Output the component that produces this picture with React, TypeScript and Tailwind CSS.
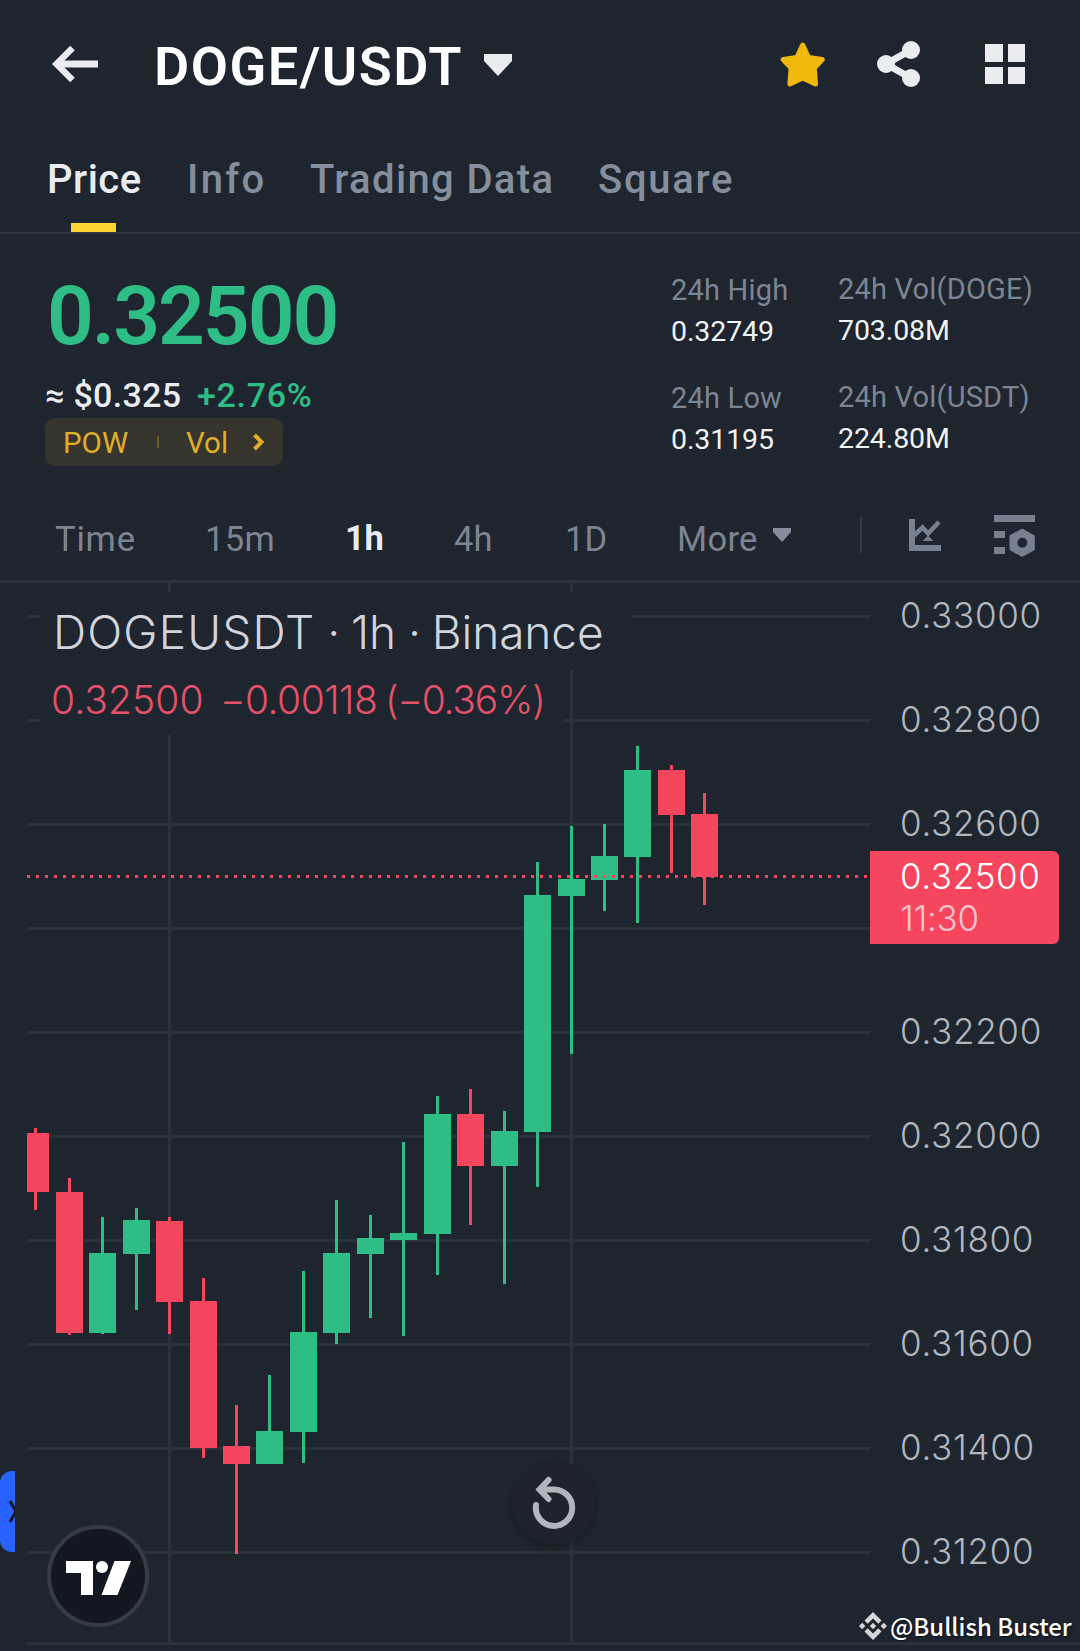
import React from 'react';

type Candle = { x: number; w?: number; wick: number; top: number; bottom: number; high: number; low: number; up: boolean };

const GREEN = '#2ebd85';
const RED = '#f6465d';

/* The chart's viewBox starts at the page offset of its pane. */
const CHART_TOP = 580;

const candles: Candle[] = [
  { x: 27, w: 22, wick: 34, top: 1133, bottom: 1192, high: 1128, low: 1210, up: false },
  { x: 56, wick: 68, top: 1192, bottom: 1333, high: 1178, low: 1335, up: false },
  { x: 89, wick: 101, top: 1253, bottom: 1333, high: 1217, low: 1334, up: true },
  { x: 123, wick: 135, top: 1220, bottom: 1254, high: 1208, low: 1310, up: true },
  { x: 156, wick: 168, top: 1221, bottom: 1302, high: 1217, low: 1334, up: false },
  { x: 190, wick: 202, top: 1301, bottom: 1448, high: 1278, low: 1458, up: false },
  { x: 223, wick: 235, top: 1446, bottom: 1464, high: 1405, low: 1554, up: false },
  { x: 256, wick: 268, top: 1431, bottom: 1464, high: 1375, low: 1464, up: true },
  { x: 290, wick: 302, top: 1332, bottom: 1432, high: 1271, low: 1463, up: true },
  { x: 323, wick: 335, top: 1253, bottom: 1333, high: 1200, low: 1344, up: true },
  { x: 357, wick: 369, top: 1238, bottom: 1254, high: 1215, low: 1318, up: true },
  { x: 390, wick: 402, top: 1233, bottom: 1240, high: 1142, low: 1336, up: true },
  { x: 424, wick: 436, top: 1114, bottom: 1234, high: 1096, low: 1275, up: true },
  { x: 457, wick: 469, top: 1114, bottom: 1166, high: 1089, low: 1225, up: false },
  { x: 491, wick: 503, top: 1131, bottom: 1166, high: 1111, low: 1284, up: true },
  { x: 524, wick: 536, top: 895, bottom: 1132, high: 862, low: 1187, up: true },
  { x: 558, wick: 570, top: 879, bottom: 896, high: 826, low: 1054, up: true },
  { x: 591, wick: 603, top: 856, bottom: 880, high: 824, low: 911, up: true },
  { x: 624, wick: 636, top: 770, bottom: 857, high: 746, low: 923, up: true },
  { x: 658, wick: 670, top: 770, bottom: 815, high: 765, low: 873, up: false },
  { x: 691, wick: 703, top: 814, bottom: 877, high: 793, low: 905, up: false },
];

const gridRows = [616, 720, 824, 928, 1032, 1136, 1240, 1344, 1448, 1552];
const gridCols = [168, 570];
const axisLabels = ['0.33000', '0.32800', '0.32600', '', '0.32200', '0.32000', '0.31800', '0.31600', '0.31400', '0.31200'];

function Header() {
  return (
    <header className="flex h-[128px] items-center pl-[52px]">
      <svg className="h-[38px] w-[46px] shrink-0" viewBox="0 0 46 38" fill="none" stroke="#eaecef">
        <path d="M46 19H6" strokeWidth="7" />
        <path d="M20.5 3 4.5 19l16 16" strokeWidth="6.5" />
      </svg>
      <h1 className="ml-[56px] w-[330px] pt-[5px] font-[Roboto,sans-serif] text-[54px] leading-[66px] font-semibold tracking-[1.5px] whitespace-nowrap text-white">
        DOGE/USDT
      </h1>
      <svg className="mt-[2px] h-[22px] w-[28px] shrink-0" viewBox="0 0 28 22" fill="#eaecef">
        <path d="M0 0h28v7L14 22 0 7z" />
      </svg>
      <svg className="ml-[268px] h-[46px] w-[46px] shrink-0" viewBox="0 0 46 46" fill="#f0b90b" stroke="#f0b90b" strokeWidth="5" strokeLinejoin="round">
        <path d="M22.700 4 28.500 16.500 42.300 18.500 34.300 27 35.500 43 22.700 37 9.900 43 11.100 27 3.100 18.500 16.900 16.500z" />
      </svg>
      <svg className="ml-[51px] h-[46px] w-[44px] shrink-0" viewBox="0 0 44 46" fill="#eaecef">
        <circle cx="9" cy="23" r="9" />
        <circle cx="34" cy="9" r="9" />
        <circle cx="34" cy="37" r="9" />
        <path d="M34 9 9 23l25 14" fill="none" stroke="#eaecef" strokeWidth="7" />
      </svg>
      <div className="ml-[64px] grid h-[40px] w-[40px] grid-cols-2 gap-[5px]">
        <i className="bg-[#eaecef]" />
        <i className="bg-[#eaecef]" />
        <i className="bg-[#eaecef]" />
        <i className="bg-[#eaecef]" />
      </div>
    </header>
  );
}

function Tabs() {
  return (
    <nav className="flex h-[106px] border-b-2 border-[#2f353f] pl-[47px] font-[Roboto,sans-serif] text-[40px] leading-[47px] font-medium whitespace-nowrap text-[#848e9c]">
      <div className="flex w-[140px] flex-col pt-[28px] text-[#eaecef]">
        <span className="tracking-[0.500px]">Price</span>
        <span className="mt-[20px] ml-[24px] h-[9px] w-[45px] bg-[#fcd535]" />
      </div>
      <span className="w-[123px] pt-[28px] tracking-[2.300px]">Info</span>
      <span className="w-[288px] pt-[28px] tracking-[1.350px]">Trading Data</span>
      <span className="pt-[28px] tracking-[1.700px]">Square</span>
    </nav>
  );
}

function Stat({ label, value }: { label: string; value: string }) {
  return (
    <div>
      <div className="text-[29px] leading-[42px] tracking-[0.200px] text-[#7d8491]">{label}</div>
      <div className="text-[28.500px] leading-[42px] font-[450] tracking-[-0.100px] text-[#f1f3f5]">{value}</div>
    </div>
  );
}

function Summary() {
  return (
    <section className="flex h-[262px] pl-[45px] font-[Roboto,sans-serif] whitespace-nowrap">
      <div className="flex w-[626px] flex-col pt-[32px]">
        <div className="pl-[2px] text-[82px] leading-[100px] font-semibold tracking-[-2px] text-[#2ebd85]">0.32500</div>
        <div className="mt-[9px] flex h-[40px] text-[34px] leading-[40px] font-medium">
          <span className="w-[152px] tracking-[0.300px] text-[#eaecef]">≈ $0.325</span>
          <span className="tracking-[0.700px] text-[#2ebd85]">+2.76%</span>
        </div>
        <div className="mt-[3px] flex h-[48px] w-[238px] items-center rounded-[10px] bg-[#35342d] pl-[18px] text-[29.500px] text-[#e0af27]">
          <span className="w-[94px] pt-[2px]">POW</span>
          <i className="h-[12px] w-[2px] bg-[#6f5b28]" />
          <span className="ml-[27px] w-[67px] pt-[2px]">Vol</span>
          <svg className="h-[18px] w-[11px]" viewBox="0 0 11 18" fill="none" stroke="#e0af27" strokeWidth="4">
            <path d="M1.500 2 8.500 9l-7 7" />
          </svg>
        </div>
      </div>
      <div className="flex w-[167px] flex-col gap-[24px] pt-[35px]">
        <Stat label="24h High" value="0.32749" />
        <Stat label="24h Low" value="0.31195" />
      </div>
      <div className="flex flex-col gap-[24px] pt-[34px]">
        <Stat label="24h Vol(DOGE)" value="703.08M" />
        <Stat label="24h Vol(USDT)" value="224.80M" />
      </div>
    </section>
  );
}

function Intervals() {
  return (
    <nav className="flex h-[84px] items-center pt-[2px] pl-[55px] font-[Roboto,sans-serif] text-[34.500px] leading-[40px] whitespace-nowrap text-[#7d8491]">
      <span className="w-[150px] tracking-[0.800px]">Time</span>
      <span className="w-[140px] tracking-[0.300px]">15m</span>
      <span className="w-[109px] pb-[2px] font-bold tracking-[-0.300px] text-[#eaecef]">1h</span>
      <span className="w-[111px]">4h</span>
      <span className="w-[112px]">1D</span>
      <span className="w-[96px] tracking-[0.300px]">More</span>
      <svg className="mb-[8px] h-[14px] w-[18px]" viewBox="0 0 18 14" fill="#848e9c">
        <path d="M0 0h18v4L9 14 0 4z" />
      </svg>
      <i className="mb-[8px] ml-[69px] h-[36px] w-[2px] bg-[#363c46]" />
      <svg className="mb-[8px] ml-[47px] h-[32px] w-[32px]" viewBox="0 0 32 32" fill="none" stroke="#76808f">
        <path d="M3 0v29h29" strokeWidth="6" />
        <path d="M5 16.500l8.500-8 5.500 6L30 3" strokeWidth="4.500" />
        <path d="M13.700 22l5.300-5.500 5.300 5.500z" fill="#76808f" stroke="none" />
      </svg>
      <svg className="mb-[6px] ml-[53px] h-[42px] w-[42px]" viewBox="0 0 42 42" fill="#76808f">
        <path d="M0 0h41v7H0zM0 16h11v7H0zM0 32h11v7H0z" />
        <path fillRule="evenodd" d="M28.200 13.500l12.600 7V35l-12.600 7-12.700-7V20.500zM28.300 22.800a5 5 0 1 0 0 10 5 5 0 0 0 0-10z" />
      </svg>
    </nav>
  );
}

function Candles() {
  return (
    <svg className="absolute inset-0 h-[1071px] w-[1080px]" viewBox="0 580 1080 1071" shapeRendering="crispEdges">
      <g fill="#29313a">
        <rect x="0" y="580" width="1080" height="3" />
        {gridCols.map((x) => (
          <rect key={x} x={x} y={CHART_TOP} width="3" height="1064" />
        ))}
        {gridRows.map((y) => (
          <rect key={y} x="27" y={y - 1} width="843" height="3" />
        ))}
        <rect x="27" y="1642" width="1053" height="3" />
      </g>
      <rect x="40" y="592" width="591" height="78" fill="#1e252e" />
      <rect x="40" y="670" width="523" height="65" fill="#1e252e" />
      {candles.map((c) => (
        <g key={c.x} fill={c.up ? GREEN : RED}>
          <rect x={c.wick} y={c.high} width="3" height={c.low - c.high} />
          <rect x={c.x} y={c.top} width={c.w ?? 27} height={c.bottom - c.top} />
        </g>
      ))}
      <path d="M27 876.500H870" stroke={RED} strokeWidth="3" strokeDasharray="3 6" />
    </svg>
  );
}

function Chart() {
  return (
    <section className="relative h-[1071px] overflow-hidden font-[Inter,sans-serif] whitespace-nowrap">
      <Candles />
      <div className="relative flex h-full">
        <div className="w-[870px] pt-[21px] pl-[51px] font-light">
          <div className="pl-[2px] text-[46px] leading-[62px] text-[#d1d4dc]">
            <span className="tracking-[1.150px]">DOGEUSDT</span>
            <span className="tracking-[-1.100px]"> · </span>
            <span>1h</span>
            <span className="tracking-[-1.100px]"> · </span>
            <span className="tracking-[-0.100px]">Binance</span>
          </div>
          <div className="flex pt-[12px] text-[39px] leading-[50px] text-[#e4526a]">
            <span className="w-[169px] tracking-[0.100px]">0.32500</span>
            <span className="w-[165px] tracking-[-0.500px]">−0.00118</span>
            <span className="tracking-[-1.200px]">(−0.36%)</span>
          </div>
        </div>
        <div className="flex flex-col pt-[9px] pl-[30px] text-[35px] leading-[52px] font-light tracking-[0.700px] text-[#b2b5be]">
          {axisLabels.map((t, i) => (
            <div key={i} className="h-[104px]">
              {t}
            </div>
          ))}
        </div>
      </div>
      <div className="absolute top-[271px] left-[870px] h-[93px] w-[189px] rounded-r-[6px] bg-[#f6465d] pt-[4px] pl-[30px] text-[35px] leading-[42px] font-light text-white">
        <div className="tracking-[0.600px]">0.32500</div>
        <div className="tracking-[-0.300px] text-[#fcc4cc]">11:30</div>
      </div>
      <div className="absolute top-[891px] left-0 flex h-[81px] w-[15px] overflow-hidden rounded-l-[12px] bg-[#2962ff]">
        <svg className="h-[81px] w-[15px]" viewBox="0 0 15 81" fill="none" stroke="#131722" strokeWidth="3">
          <path d="M10 30l6 10.500-6 10.500" />
        </svg>
      </div>
      <div className="absolute top-[945px] left-[47px] flex h-[102px] w-[102px] items-center justify-center rounded-full border-4 border-[#363a45] bg-[#131722] pt-[3px]">
        <svg className="h-[34px] w-[65px]" viewBox="0 0 65 34" fill="#fff">
          <path d="M0 0h27v34H15V12H0zM48.500 0H65L51.500 34h-16z" />
          <circle cx="36" cy="6" r="6" />
        </svg>
      </div>
      <div className="absolute top-[881px] left-[512px] flex h-[84px] w-[84px] items-center justify-center rounded-full bg-[#1e222d] pb-[1px] shadow-[0_3px_6px_rgba(0,0,0,0.25)]">
        <svg className="h-[54px] w-[46px]" viewBox="531 1476 46 54" fill="none" stroke="#b2b5be" strokeWidth="6" strokeLinecap="round">
          <path d="M536 1505a18.200 18.200 0 1 0 18-15.500H540M548.500 1480l-9 9.500 9 9.500" />
        </svg>
      </div>
      <div className="absolute top-[1028px] left-[859px] flex items-center font-['Noto_Sans_CJK_SC',sans-serif] text-[24px] leading-[36px] font-medium text-white">
        <svg className="h-[28px] w-[28px]" viewBox="0 0 28 28" fill="#d6d6d8">
          <path d="M14 0l8.500 8.500-3.200 3.200L14 6.400l-5.300 5.300-3.200-3.200zM14 28l8.500-8.500-3.200-3.200-5.300 5.300-5.300-5.300-3.200 3.200zM14 10.800l3.200 3.200-3.200 3.200-3.200-3.200zM3.200 10.800L6.400 14l-3.200 3.200L0 14zM24.800 10.800L28 14l-3.200 3.200-3.200-3.200z" />
        </svg>
        <span className="ml-[3px] [text-shadow:1px_1px_2px_rgba(0,0,0,0.6)]">@Bullish Buster</span>
      </div>
    </section>
  );
}

export default function App() {
  return (
    <main className="h-[1651px] w-[1080px] overflow-hidden bg-[#1e252e]">
      <Header />
      <Tabs />
      <Summary />
      <Intervals />
      <Chart />
    </main>
  );
}
